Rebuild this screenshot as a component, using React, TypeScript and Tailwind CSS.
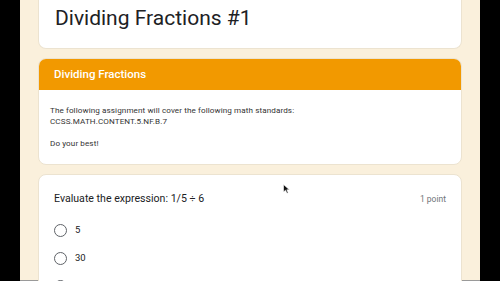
export default function App() {
  return (
    <div className="flex h-[281px] w-[500px] overflow-hidden bg-black font-['Roboto',sans-serif]">
      <div className="relative ml-[20px] flex h-[281px] w-[460px] flex-col gap-[9px] border-b border-[#9a9a9a] bg-[#faf0dc] px-[18px]">
        {/* title card */}
        <div className="flex h-[49px] shrink-0 items-start rounded-b-lg border border-t-0 border-[#ece3d0] bg-white pl-[16px] pt-[5px]">
          <h1 className="text-[21px] leading-[26px] text-[#202124]">Dividing Fractions #1</h1>
        </div>

        {/* section card */}
        <div className="shrink-0 overflow-hidden rounded-lg border border-[#ece3d0] bg-white">
          <div className="flex h-[31px] items-center bg-[#f29900] px-[15px]">
            <span className="text-[11.5px] font-medium text-white">Dividing Fractions</span>
          </div>
          <div className="px-[11px] pb-[15px] pt-[15px] text-[8.1px] leading-[11px] tracking-[0.1px] text-[#333]">
            <p>The following assignment will cover the following math standards:</p>
            <p>CCSS.MATH.CONTENT.5.NF.B.7</p>
            <p className="mt-[11px]">Do your best!</p>
          </div>
        </div>

        {/* question card */}
        <div className="shrink-0 rounded-lg border border-[#ece3d0] bg-white px-[15px] pt-[16px]">
          <div className="flex items-center justify-between">
            <span className="text-[10.6px] text-[#202124]">Evaluate the expression: 1/5 ÷ 6</span>
            <span className="text-[8.5px] text-[#70757a]">1 point</span>
          </div>
          <div className="mt-[16px] flex flex-col gap-[14px]">
            {["5", "30", "6/5"].map((opt) => (
              <div key={opt} className="flex items-center gap-[8px]">
                <div className="h-[13px] w-[13px] rounded-full border-[1.5px] border-[#5f6368]" />
                <span className="text-[9.5px] text-[#202124]">{opt}</span>
              </div>
            ))}
          </div>
        </div>

        {/* mouse pointer */}
        <svg className="absolute left-[263px] top-[184px]" width="7" height="10" viewBox="0 0 7 10">
          <path d="M0.5 0.5 L0.5 8 L2.5 6.2 L4 9.3 L5.2 8.8 L3.8 5.8 L6.4 5.8 Z" fill="#111" stroke="#fff" strokeWidth="0.6" />
        </svg>
      </div>
    </div>
  )
}
